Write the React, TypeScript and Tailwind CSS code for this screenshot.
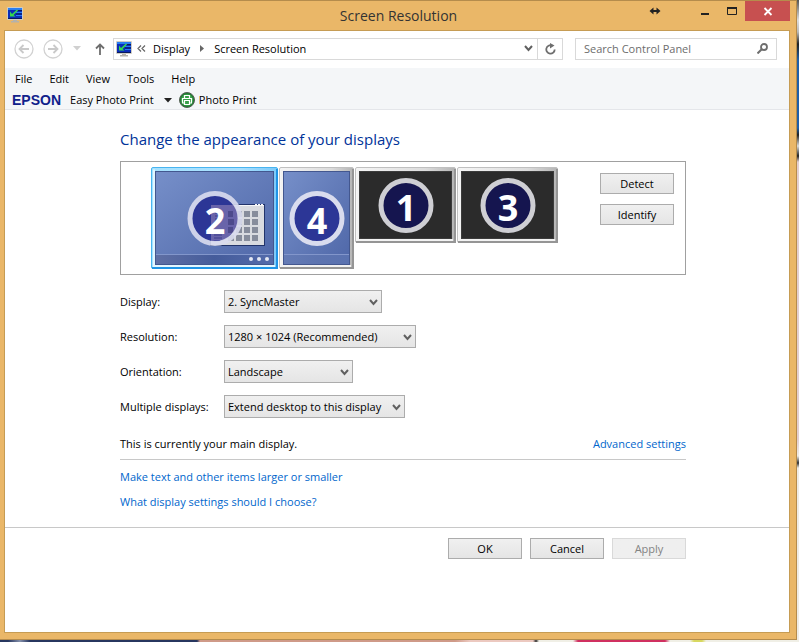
import React from 'react';

type MonitorInfo = {
  id: number;
  width: number;
  height: number;
  kind: 'main' | 'extended' | 'off';
};

const monitors: MonitorInfo[] = [
  { id: 2, width: 127, height: 102, kind: 'main' },
  { id: 4, width: 75, height: 102, kind: 'extended' },
  { id: 1, width: 101, height: 76, kind: 'off' },
  { id: 3, width: 101, height: 76, kind: 'off' },
];

const settings = [
  { id: 'display', label: 'Display:', width: 'w-[158px]', options: ['2. SyncMaster'] },
  { id: 'resolution', label: 'Resolution:', width: 'w-[192px]', options: ['1280 × 1024 (Recommended)'] },
  { id: 'orientation', label: 'Orientation:', width: 'w-[129px]', options: ['Landscape', 'Portrait'] },
  { id: 'multiple', label: 'Multiple displays:', width: 'w-[181px]', options: ['Extend desktop to this display'] },
];

function DisplayIcon() {
  return (
    <svg width="16" height="16" viewBox="0 0 16 16" className="shrink-0" aria-hidden="true">
      <rect x="0" y="0" width="16" height="13" rx="1" fill="#cfccc4" />
      <rect x="1" y="1" width="14" height="11" fill="#0a2cb8" />
      <path d="M1 1h14v2H1zM9 5h6v1H9zM9 8h6v1H9z" fill="#2a7df2" />
      <path d="M10 3.500h5M9 7h6M1 11.500h14" stroke="#081a5c" />
      <path d="M3 4.500v5h5.500L6.500 8 11 3.500 10 2.500 5 7z" fill="#35d84e" />
      <path d="M6 13h4v1h2v1.500H4V14h2z" fill="#b5b2aa" />
    </svg>
  );
}

function Chevron({ className = '' }: { className?: string }) {
  return (
    <svg width="9" height="7" viewBox="0 0 9 7" className={className} aria-hidden="true">
      <path d="M1 1l3.500 4L8 1" fill="none" stroke="#606060" strokeWidth="2" />
    </svg>
  );
}

function NavCircle({ label, flip }: { label: string; flip?: boolean }) {
  return (
    <button aria-label={label} className="shrink-0">
      <svg width="20" height="20" viewBox="0 0 20 20" className={flip ? 'rotate-180' : ''}>
        <circle cx="10" cy="10" r="9" fill="none" stroke="#d2d2d2" strokeWidth="1.300" />
        <path d="M5.500 10H15M9.500 6l-4 4 4 4" fill="none" stroke="#c9c9c9" strokeWidth="1.800" />
      </svg>
    </button>
  );
}

function Monitor({ monitor }: { monitor: MonitorInfo }) {
  const { id, width: w, height: h, kind } = monitor;
  const off = kind === 'off';
  const main = kind === 'main';
  const cx = Math.floor(w / 2) + 1;
  const cy = off ? 38.5 : 51.5;

  return (
    <button aria-label={`Display ${id}`} aria-pressed={main} className="shrink-0">
      <svg width={w} height={h} viewBox={`0 0 ${w} ${h}`}>
        <defs>
          <linearGradient id={`screen${id}`} x1="0" y1="0" x2="1" y2="1">
            <stop offset="0" stopColor={off ? '#2b2b2b' : '#768fc9'} />
            <stop offset="1" stopColor={off ? '#2b2b2b' : '#4f67a8'} />
          </linearGradient>
          <linearGradient id={`frame${id}`} x1="0" y1="0" x2="1" y2="0">
            <stop offset="0" stopColor={main ? '#a5e2ff' : '#f6f6f6'} />
            <stop offset="0.7" stopColor={main ? '#a9e0ff' : '#dcdcdc'} />
            <stop offset="1" stopColor={main ? '#7cc9f8' : '#b4b4b4'} />
          </linearGradient>
          <linearGradient id={`bar${id}`} x1="0" y1="0" x2="1" y2="0">
            <stop offset="0" stopColor={main ? '#5f6fa4' : '#647bb5'} />
            <stop offset="0.5" stopColor={main ? '#455c9b' : '#5d74b0'} />
            <stop offset="1" stopColor={main ? '#536bab' : '#5a72b0'} />
          </linearGradient>
        </defs>
        <rect x="0.500" y="0.500" width={w - 1} height={h - 1} rx="1.500" fill={`url(#frame${id})`} stroke={main ? '#48b4f0' : '#c0c0c0'} />
        <path d={`M1 ${h - 1}H${w - 1}V2`} fill="none" stroke={main ? '#1f94e6' : '#959595'} strokeWidth="2" />
        <path d={`M3 2.500V${h - 3}H${w - 3}`} fill="none" stroke={main ? '#e2f6ff' : '#f2f2f2'} strokeWidth="2" />
        <rect x="4.500" y="4.500" width={w - 9} height={h - 9} fill={`url(#screen${id})`} stroke={off ? '#3c3c3c' : '#43578f'} />
        {!off && (
          <g>
            <rect x="5" y={h - 14} width={w - 10} height="9" fill={`url(#bar${id})`} />
            <path d={`M5 ${h - 14.5}H${w - 5}`} stroke="#8296cb" />
          </g>
        )}
        {main && (
          <g>
            <circle cx="100" cy="92" r="2" fill="#e4e8f3" />
            <circle cx="108" cy="92" r="2" fill="#e4e8f3" />
            <circle cx="116" cy="92" r="2" fill="#e4e8f3" />
            <rect x="59" y="37" width="55" height="42" fill="#22346b" />
            <rect x="60" y="38" width="53" height="40" fill="#d9dbe0" />
            <path d="M60 38.500H113" stroke="#f6f7f9" />
            <path d="M104 37.500h8" stroke="#f6f7f9" strokeDasharray="2 1" />
            {[44, 52, 60, 68].map((y) =>
              [77, 85, 93, 101].map((x) => <rect key={`${x}-${y}`} x={x} y={y} width="6" height="6" fill="#878d9c" />)
            )}
          </g>
        )}
        <circle cx={cx} cy={cy} r="23" fill={off ? '#15154f' : '#2c3696'} />
        {main && (
          <g>
            <path d="M60 38H82.500A23 23 0 0 1 82.500 65L74 72.500 60 74z" fill="#7069ac" opacity="0.9" />
            <path d="M64 46h8M64 49h8M64 52h8M63 68h8M63 71h8" stroke="#3d3c8b" />
            <path d="M77 44h5v6h-5zM77 52h6v6h-6zM77 60h5v6h-5z" fill="#4d4a8c" />
          </g>
        )}
        <circle cx={cx} cy={cy} r="25" fill="none" stroke={off ? '#cfcfd4' : '#d9dcee'} strokeOpacity={main ? 0.9 : 1} strokeWidth="5" />
        <text x={cx} y={cy + 15.5} textAnchor="middle" fill="#fff" className="font-['Open_Sans'] text-[36px] font-bold">
          {id}
        </text>
      </svg>
    </button>
  );
}

function PushButton({ children, disabled }: { children: React.ReactNode; disabled?: boolean }) {
  return (
    <button
      disabled={disabled}
      className="h-[21px] w-[74px] border border-[#acacac] bg-linear-to-b from-[#f0f0f0] to-[#e5e5e5] leading-4 disabled:border-[#d9d9d9] disabled:from-[#efefef] disabled:to-[#efefef] disabled:text-[#838383]"
    >
      {children}
    </button>
  );
}

function TitleBar() {
  return (
    <header className="grid h-[29px] grid-cols-[1fr_auto_1fr] pr-1.5 pl-[7px]">
      <div className="pt-1.5">
        <DisplayIcon />
      </div>
      <h1 className="pt-[5px] text-sm leading-5 text-[#333]">Screen Resolution</h1>
      <div className="flex items-start justify-end">
        <svg width="12" height="20" viewBox="0 0 12 20" className="mr-[33px]" aria-hidden="true">
          <path d="M2 10h8" stroke="#222" strokeWidth="2" />
          <path d="M0.500 10l4-3.500v7zM11.500 10l-4-3.500v7z" fill="#222" />
        </svg>
        <button aria-label="Minimize">
          <svg width="26" height="20" viewBox="0 0 26 20">
            <path d="M7 13h8" stroke="#222" strokeWidth="2" />
          </svg>
        </button>
        <button aria-label="Maximize">
          <svg width="25" height="20" viewBox="0 0 25 20">
            <path d="M7.500 7v6.500h9V7" fill="none" stroke="#222" />
            <path d="M7 7h10" stroke="#222" strokeWidth="2" />
          </svg>
        </button>
        <button aria-label="Close" className="bg-[#c75050]">
          <svg width="45" height="20" viewBox="0 0 45 20">
            <path d="M19.500 7l7 7M26.500 7l-7 7" stroke="#fff" strokeWidth="1.800" />
          </svg>
        </button>
      </div>
    </header>
  );
}

function AddressBar() {
  return (
    <div className="flex h-[37px] items-center pb-0.5 pl-[9px] pr-3">
      <NavCircle label="Back" />
      <span className="w-[9px]" />
      <NavCircle label="Forward" flip />
      <button aria-label="Recent locations" className="ml-2.5">
        <svg width="8" height="5" viewBox="0 0 8 5">
          <path d="M0 0h8L4 4.500z" fill="#d0d0d0" />
        </svg>
      </button>
      <button aria-label="Up" className="ml-3.5">
        <svg width="10" height="12" viewBox="0 0 10 12">
          <path d="M5 12V1.500M1 5.500l4-4 4 4" fill="none" stroke="#6e6e6e" strokeWidth="1.800" />
        </svg>
      </button>
      <nav className="ml-2 flex h-[22px] flex-1 items-center border border-[#d9d9d9] pl-0.5">
        <DisplayIcon />
        <svg width="9" height="7" viewBox="0 0 9 7" className="ml-[5px]" aria-hidden="true">
          <path d="M4 0.500l-3 3 3 3M8 0.500l-3 3 3 3" fill="none" stroke="#666" strokeWidth="1.200" />
        </svg>
        <a href="#display" className="ml-[7px]">Display</a>
        <svg width="4" height="7" viewBox="0 0 4 7" className="mx-2.5" aria-hidden="true">
          <path d="M0 0l4 3.500L0 7z" fill="#666" />
        </svg>
        <a href="#resolution" className="flex-1">Screen Resolution</a>
        <button aria-label="Previous locations" className="mr-1">
          <Chevron />
        </button>
        <button aria-label="Refresh" className="flex h-full w-[25px] items-center justify-center border-l border-[#d9d9d9]">
          <svg width="11" height="12" viewBox="0 0 11 12">
            <path d="M7 2.500A4.200 4.200 0 1 0 9.700 6.500" fill="none" stroke="#6e6e6e" strokeWidth="1.800" />
            <path d="M5 0v5.500L9.500 2.500z" fill="#6e6e6e" />
          </svg>
        </button>
      </nav>
      <div className="ml-3 flex h-[22px] w-[202px] items-center border border-[#d9d9d9] px-2">
        <input aria-label="Search Control Panel" placeholder="Search Control Panel" className="min-w-0 flex-1 outline-none placeholder:text-[#6d6d6d]" />
        <svg width="11" height="11" viewBox="0 0 11 11" aria-hidden="true">
          <circle cx="7" cy="4" r="3" fill="none" stroke="#6e6e6e" strokeWidth="1.800" />
          <path d="M5 6L0.500 10.500" stroke="#6e6e6e" strokeWidth="2" />
        </svg>
      </div>
    </div>
  );
}

function MenuBar() {
  return (
    <div className="border-b border-[#e4e6ea] bg-[#f4f6f8] pt-px">
      <div className="flex h-5 items-center gap-[17px] pl-2.5">
        {['File', 'Edit', 'View', 'Tools', 'Help'].map((item) => (
          <button key={item}>{item}</button>
        ))}
      </div>
      <div className="flex h-5 items-end pl-[7px]">
        <span className="font-['Liberation_Sans'] text-sm leading-[18px] font-bold text-[#10218b]">EPSON</span>
        <button className="ml-[9px] flex h-[18px] items-center gap-2.5">
          Easy Photo Print
          <svg width="8" height="5" viewBox="0 0 8 5">
            <path d="M0 0h8L4 4.500z" fill="#222" />
          </svg>
        </button>
        <button className="ml-[7px] flex h-[18px] items-center gap-1">
          <svg width="16" height="16" viewBox="0 0 16 16">
            <circle cx="8" cy="8" r="7.500" fill="#1f7d32" stroke="#555f55" />
            <circle cx="8" cy="8" r="6" fill="#36a048" />
            <path d="M5.500 6V3.500h5V6M5.500 11H3.500V6.500h9V11h-2M5.500 8.500h5v4h-5z" fill="none" stroke="#fff" strokeWidth="1.200" />
          </svg>
          Photo Print
        </button>
      </div>
    </div>
  );
}

export default function App() {
  return (
    <div className="grid min-h-screen grid-cols-[1fr_2px] grid-rows-[1fr_2px] font-['Open_Sans',sans-serif] text-[11px] leading-4 text-black">
      <div className="flex flex-col border-t border-r border-b border-[#b58c4c] bg-[#eab768]">
        <TitleBar />
        <div className="mr-1.5 mb-1.5 ml-1 flex flex-1 flex-col border border-[#c69c54] bg-white">
          <AddressBar />
          <MenuBar />

          <main className="ml-[115px] max-w-[566px]">
            <h2 className="pt-[17px] text-[15px] leading-6 text-[#003399]">Change the appearance of your displays</h2>

            <section className="mt-2.5 flex h-[114px] items-start border border-[#a0a0a0] pt-[5px] pr-[11px] pl-[30px]">
              <div className="flex flex-1 items-start gap-px">
                {monitors.map((m) => (
                  <Monitor key={m.id} monitor={m} />
                ))}
              </div>
              <div className="flex flex-col gap-2.5 pt-1.5">
                <PushButton>Detect</PushButton>
                <PushButton>Identify</PushButton>
              </div>
            </section>

            <form className="mt-[15px] flex flex-col gap-3">
              {settings.map((s) => (
                <div key={s.id} className="flex h-[23px] items-center">
                  <label htmlFor={s.id} className="w-[104px] shrink-0">{s.label}</label>
                  <div className="relative">
                    <select
                      id={s.id}
                      className={`${s.width} h-[23px] appearance-none border border-[#acacac] bg-linear-to-b from-[#f0f0f0] to-[#e5e5e5] pl-[3px]`}
                    >
                      {s.options.map((o) => (
                        <option key={o}>{o}</option>
                      ))}
                    </select>
                    <Chevron className="pointer-events-none absolute top-[9px] right-1" />
                  </div>
                </div>
              ))}
            </form>

            <div className="mt-[18px] flex justify-between border-b border-[#c8c8c8] pb-[7px]">
              <p>This is currently your main display.</p>
              <a href="#advanced" className="text-[#0066cc]">Advanced settings</a>
            </div>
            <div className="mt-[9px] flex flex-col items-start gap-[9px] text-[#0066cc]">
              <a href="#text-size">Make text and other items larger or smaller</a>
              <a href="#help">What display settings should I choose?</a>
            </div>
          </main>

          <footer className="mt-[17px] border-t border-[#c8c8c8]">
            <div className="ml-[115px] flex max-w-[566px] justify-end gap-2 pt-2.5">
              <PushButton>OK</PushButton>
              <PushButton>Cancel</PushButton>
              <PushButton disabled>Apply</PushButton>
            </div>
          </footer>
        </div>
      </div>

      {/* slivers of the desktop wallpaper behind the window */}
      <div className="bg-[linear-gradient(#555_0px,#ddd_20px,#bbb_32px,#222_44px,#1f5fa8_60px,#1f5fa8_128px,#222_135px,#ddd_146px,#222_156px,#e3cfd2_162px,#e3cfd2_440px,#efece6_456px,#333_463px,#efece6_468px)]" />
      <div className="col-span-2 bg-[linear-gradient(90deg,#27365f_8px,#8590ab_20px,#27365f_30px,#27365f_197px,#cf9a88_200px,#cf9a88_455px,#ecc9c0_470px,#ecc9c0_533px,#333_536px,#f0efe6_539px,#f0efe6_573px,#d03060_578px,#d03060_665px,#f0efe6_670px,#f0efe6_690px,#d8d860_694px,#d8d860_702px,#f0efe6_706px)]" />
    </div>
  );
}
